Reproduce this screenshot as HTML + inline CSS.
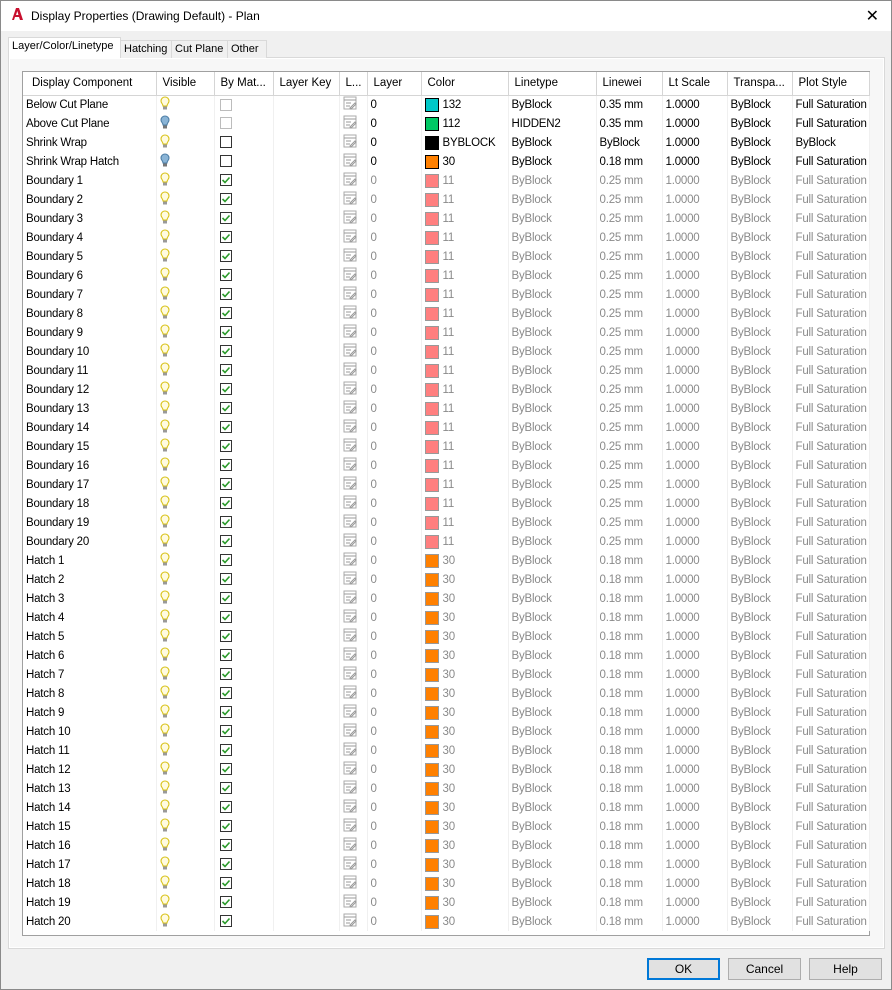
<!DOCTYPE html>
<html><head><meta charset="utf-8"><style>
*{box-sizing:border-box}
body{margin:0;width:892px;height:990px;background:#f0f0f0;font-family:"Liberation Sans",sans-serif;font-size:11.5px;color:#000;position:relative;overflow:hidden}
.win{position:absolute;left:0;top:0;width:892px;height:990px;border:1px solid #8a8a8a}
.title{position:absolute;left:1px;top:1px;width:890px;height:30px;background:#fff}
.title .t{position:absolute;left:30px;top:8px;font-size:12px}
.title .x{position:absolute;right:12px;top:5px;font-size:16px}
.tab{position:absolute;top:40px;height:18px;border:1px solid #d9d9d9;border-bottom:none;background:#f0f0f0;padding:2px 3px;font-size:11px;white-space:nowrap;overflow:hidden}
.panel{position:absolute;left:8px;top:57px;width:877px;height:892px;background:#fff;border:1px solid #d9d9d9}
.inner{position:absolute;left:1px;top:1px;width:873px;height:888px;background:#f7f7f7}
.grid{position:absolute;left:22px;top:71px;width:848px;height:865px;border:1px solid #a0a0a0;background:#fff}
table{border-collapse:collapse;table-layout:fixed;position:absolute;left:0;top:0;width:846px}
th{height:23px;font-weight:normal;text-align:left;padding:0 0 0 6px;border-right:1px solid #d5d5d5;border-bottom:1px solid #d5d5d5;background:#fff;white-space:nowrap;overflow:hidden}
td{height:19px;padding:0 0 0 3px;border-right:1px solid #f0f0f0;white-space:nowrap;overflow:hidden;vertical-align:middle;letter-spacing:-0.2px}
tr.g td.c{color:#8a8a8a}
.cb{display:inline-block;width:12px;height:12px;border:1px solid #333;background:#fff;vertical-align:middle;margin-left:2px;position:relative}
.cb.d{border-color:#bcbcbc}
.cb svg{position:absolute;left:-1px;top:-1px}
.sw{display:inline-block;width:14px;height:14px;border:1px solid #000;vertical-align:middle;margin-right:4px}
.sw.l{border-color:#999}
.btn{position:absolute;top:958px;height:22px;border:1px solid #adadad;background:#e1e1e1;text-align:center;line-height:20px;font-size:12px}
</style></head><body>
<svg width="0" height="0" style="position:absolute">
<defs>
<symbol id="by" viewBox="0 0 10 15"><path d="M5 1C2.5 1 1 3 1 5c0 2 2 3 2 5h4c0-2 2-3 2-5 0-2-1.5-4-4-4z" fill="#fffbe0" stroke="#d8c21a" stroke-width="1.1"/><rect x="3" y="10.5" width="4" height="3" fill="#999"/></symbol>
<symbol id="bb" viewBox="0 0 10 15"><path d="M5 1C2.5 1 1 3 1 5c0 2 2 3 2 5h4c0-2 2-3 2-5 0-2-1.5-4-4-4z" fill="#8ab4d6" stroke="#4f7fa6" stroke-width="1.1"/><rect x="3" y="10.5" width="4" height="3" fill="#777"/></symbol>
<symbol id="lk" viewBox="0 0 14 14"><rect x="1" y="1" width="12" height="12" fill="#fff" stroke="#aaa"/><path d="M1 4h12M3 7h5M3 10h4M7 12l5-5 1 1-5 5z" stroke="#999" fill="none"/></symbol>
<symbol id="ck" viewBox="0 0 12 12"><path d="M2.5 6l2.5 2.5 4.5-5" stroke="#2a9a2a" stroke-width="1.6" fill="none"/></symbol>
</defs></svg>
<div class="win"></div>
<div class="title"><svg style="position:absolute;left:9px;top:6px" width="14" height="14" viewBox="0 0 14 14"><path d="M2 13L6 1h3l4 12h-3l-1-3H5l-1 3z M6 8h2.5L7.3 4z" fill="#c8102e" fill-rule="evenodd"/></svg><span class="t">Display Properties (Drawing Default) - Plan</span><span class="x">✕</span></div>
<div class="panel"><div class="inner"></div></div>
<div class="tab" style="left:8px;top:37px;width:113px;height:21px;background:#fff;z-index:2">Layer/Color/Linetype</div>
<div class="tab" style="left:120px;width:52px">Hatching</div>
<div class="tab" style="left:171px;width:57px">Cut Plane</div>
<div class="tab" style="left:227px;width:40px">Other</div>
<div class="grid"><table>
<colgroup><col style="width:133px"><col style="width:58px"><col style="width:59px"><col style="width:66px"><col style="width:28px"><col style="width:54px"><col style="width:87px"><col style="width:88px"><col style="width:66px"><col style="width:65px"><col style="width:65px"><col style="width:77px"></colgroup>
<tr><th style="padding-left:9px">Display Component</th><th>Visible</th><th>By Mat...</th><th>Layer Key</th><th>L...</th><th>Layer</th><th>Color</th><th>Linetype</th><th>Linewei</th><th>Lt Scale</th><th>Transpa...</th><th>Plot Style</th></tr>
<tr><td>Below Cut Plane</td><td><svg width="10" height="15"><use href="#by"/></svg></td><td><span class="cb d"></span></td><td></td><td><svg width="14" height="14"><use href="#lk"/></svg></td><td class="c">0</td><td><span class="sw" style="background:#00c8c8"></span>132</td><td>ByBlock</td><td>0.35 mm</td><td>1.0000</td><td>ByBlock</td><td>Full Saturation</td></tr>
<tr><td>Above Cut Plane</td><td><svg width="10" height="15"><use href="#bb"/></svg></td><td><span class="cb d"></span></td><td></td><td><svg width="14" height="14"><use href="#lk"/></svg></td><td class="c">0</td><td><span class="sw" style="background:#00c864"></span>112</td><td>HIDDEN2</td><td>0.35 mm</td><td>1.0000</td><td>ByBlock</td><td>Full Saturation</td></tr>
<tr><td>Shrink Wrap</td><td><svg width="10" height="15"><use href="#by"/></svg></td><td><span class="cb"></span></td><td></td><td><svg width="14" height="14"><use href="#lk"/></svg></td><td class="c">0</td><td><span class="sw" style="background:#000"></span>BYBLOCK</td><td>ByBlock</td><td>ByBlock</td><td>1.0000</td><td>ByBlock</td><td>ByBlock</td></tr>
<tr><td>Shrink Wrap Hatch</td><td><svg width="10" height="15"><use href="#bb"/></svg></td><td><span class="cb"></span></td><td></td><td><svg width="14" height="14"><use href="#lk"/></svg></td><td class="c">0</td><td><span class="sw" style="background:#ff8000"></span>30</td><td>ByBlock</td><td>0.18 mm</td><td>1.0000</td><td>ByBlock</td><td>Full Saturation</td></tr>
<tr class="g"><td>Boundary 1</td><td><svg width="10" height="15"><use href="#by"/></svg></td><td><span class="cb"><svg width="12" height="12"><use href="#ck"/></svg></span></td><td></td><td><svg width="14" height="14"><use href="#lk"/></svg></td><td class="c">0</td><td class="c"><span class="sw l" style="background:#ff7f7f"></span>11</td><td class="c">ByBlock</td><td class="c">0.25 mm</td><td class="c">1.0000</td><td class="c">ByBlock</td><td class="c">Full Saturation</td></tr>
<tr class="g"><td>Boundary 2</td><td><svg width="10" height="15"><use href="#by"/></svg></td><td><span class="cb"><svg width="12" height="12"><use href="#ck"/></svg></span></td><td></td><td><svg width="14" height="14"><use href="#lk"/></svg></td><td class="c">0</td><td class="c"><span class="sw l" style="background:#ff7f7f"></span>11</td><td class="c">ByBlock</td><td class="c">0.25 mm</td><td class="c">1.0000</td><td class="c">ByBlock</td><td class="c">Full Saturation</td></tr>
<tr class="g"><td>Boundary 3</td><td><svg width="10" height="15"><use href="#by"/></svg></td><td><span class="cb"><svg width="12" height="12"><use href="#ck"/></svg></span></td><td></td><td><svg width="14" height="14"><use href="#lk"/></svg></td><td class="c">0</td><td class="c"><span class="sw l" style="background:#ff7f7f"></span>11</td><td class="c">ByBlock</td><td class="c">0.25 mm</td><td class="c">1.0000</td><td class="c">ByBlock</td><td class="c">Full Saturation</td></tr>
<tr class="g"><td>Boundary 4</td><td><svg width="10" height="15"><use href="#by"/></svg></td><td><span class="cb"><svg width="12" height="12"><use href="#ck"/></svg></span></td><td></td><td><svg width="14" height="14"><use href="#lk"/></svg></td><td class="c">0</td><td class="c"><span class="sw l" style="background:#ff7f7f"></span>11</td><td class="c">ByBlock</td><td class="c">0.25 mm</td><td class="c">1.0000</td><td class="c">ByBlock</td><td class="c">Full Saturation</td></tr>
<tr class="g"><td>Boundary 5</td><td><svg width="10" height="15"><use href="#by"/></svg></td><td><span class="cb"><svg width="12" height="12"><use href="#ck"/></svg></span></td><td></td><td><svg width="14" height="14"><use href="#lk"/></svg></td><td class="c">0</td><td class="c"><span class="sw l" style="background:#ff7f7f"></span>11</td><td class="c">ByBlock</td><td class="c">0.25 mm</td><td class="c">1.0000</td><td class="c">ByBlock</td><td class="c">Full Saturation</td></tr>
<tr class="g"><td>Boundary 6</td><td><svg width="10" height="15"><use href="#by"/></svg></td><td><span class="cb"><svg width="12" height="12"><use href="#ck"/></svg></span></td><td></td><td><svg width="14" height="14"><use href="#lk"/></svg></td><td class="c">0</td><td class="c"><span class="sw l" style="background:#ff7f7f"></span>11</td><td class="c">ByBlock</td><td class="c">0.25 mm</td><td class="c">1.0000</td><td class="c">ByBlock</td><td class="c">Full Saturation</td></tr>
<tr class="g"><td>Boundary 7</td><td><svg width="10" height="15"><use href="#by"/></svg></td><td><span class="cb"><svg width="12" height="12"><use href="#ck"/></svg></span></td><td></td><td><svg width="14" height="14"><use href="#lk"/></svg></td><td class="c">0</td><td class="c"><span class="sw l" style="background:#ff7f7f"></span>11</td><td class="c">ByBlock</td><td class="c">0.25 mm</td><td class="c">1.0000</td><td class="c">ByBlock</td><td class="c">Full Saturation</td></tr>
<tr class="g"><td>Boundary 8</td><td><svg width="10" height="15"><use href="#by"/></svg></td><td><span class="cb"><svg width="12" height="12"><use href="#ck"/></svg></span></td><td></td><td><svg width="14" height="14"><use href="#lk"/></svg></td><td class="c">0</td><td class="c"><span class="sw l" style="background:#ff7f7f"></span>11</td><td class="c">ByBlock</td><td class="c">0.25 mm</td><td class="c">1.0000</td><td class="c">ByBlock</td><td class="c">Full Saturation</td></tr>
<tr class="g"><td>Boundary 9</td><td><svg width="10" height="15"><use href="#by"/></svg></td><td><span class="cb"><svg width="12" height="12"><use href="#ck"/></svg></span></td><td></td><td><svg width="14" height="14"><use href="#lk"/></svg></td><td class="c">0</td><td class="c"><span class="sw l" style="background:#ff7f7f"></span>11</td><td class="c">ByBlock</td><td class="c">0.25 mm</td><td class="c">1.0000</td><td class="c">ByBlock</td><td class="c">Full Saturation</td></tr>
<tr class="g"><td>Boundary 10</td><td><svg width="10" height="15"><use href="#by"/></svg></td><td><span class="cb"><svg width="12" height="12"><use href="#ck"/></svg></span></td><td></td><td><svg width="14" height="14"><use href="#lk"/></svg></td><td class="c">0</td><td class="c"><span class="sw l" style="background:#ff7f7f"></span>11</td><td class="c">ByBlock</td><td class="c">0.25 mm</td><td class="c">1.0000</td><td class="c">ByBlock</td><td class="c">Full Saturation</td></tr>
<tr class="g"><td>Boundary 11</td><td><svg width="10" height="15"><use href="#by"/></svg></td><td><span class="cb"><svg width="12" height="12"><use href="#ck"/></svg></span></td><td></td><td><svg width="14" height="14"><use href="#lk"/></svg></td><td class="c">0</td><td class="c"><span class="sw l" style="background:#ff7f7f"></span>11</td><td class="c">ByBlock</td><td class="c">0.25 mm</td><td class="c">1.0000</td><td class="c">ByBlock</td><td class="c">Full Saturation</td></tr>
<tr class="g"><td>Boundary 12</td><td><svg width="10" height="15"><use href="#by"/></svg></td><td><span class="cb"><svg width="12" height="12"><use href="#ck"/></svg></span></td><td></td><td><svg width="14" height="14"><use href="#lk"/></svg></td><td class="c">0</td><td class="c"><span class="sw l" style="background:#ff7f7f"></span>11</td><td class="c">ByBlock</td><td class="c">0.25 mm</td><td class="c">1.0000</td><td class="c">ByBlock</td><td class="c">Full Saturation</td></tr>
<tr class="g"><td>Boundary 13</td><td><svg width="10" height="15"><use href="#by"/></svg></td><td><span class="cb"><svg width="12" height="12"><use href="#ck"/></svg></span></td><td></td><td><svg width="14" height="14"><use href="#lk"/></svg></td><td class="c">0</td><td class="c"><span class="sw l" style="background:#ff7f7f"></span>11</td><td class="c">ByBlock</td><td class="c">0.25 mm</td><td class="c">1.0000</td><td class="c">ByBlock</td><td class="c">Full Saturation</td></tr>
<tr class="g"><td>Boundary 14</td><td><svg width="10" height="15"><use href="#by"/></svg></td><td><span class="cb"><svg width="12" height="12"><use href="#ck"/></svg></span></td><td></td><td><svg width="14" height="14"><use href="#lk"/></svg></td><td class="c">0</td><td class="c"><span class="sw l" style="background:#ff7f7f"></span>11</td><td class="c">ByBlock</td><td class="c">0.25 mm</td><td class="c">1.0000</td><td class="c">ByBlock</td><td class="c">Full Saturation</td></tr>
<tr class="g"><td>Boundary 15</td><td><svg width="10" height="15"><use href="#by"/></svg></td><td><span class="cb"><svg width="12" height="12"><use href="#ck"/></svg></span></td><td></td><td><svg width="14" height="14"><use href="#lk"/></svg></td><td class="c">0</td><td class="c"><span class="sw l" style="background:#ff7f7f"></span>11</td><td class="c">ByBlock</td><td class="c">0.25 mm</td><td class="c">1.0000</td><td class="c">ByBlock</td><td class="c">Full Saturation</td></tr>
<tr class="g"><td>Boundary 16</td><td><svg width="10" height="15"><use href="#by"/></svg></td><td><span class="cb"><svg width="12" height="12"><use href="#ck"/></svg></span></td><td></td><td><svg width="14" height="14"><use href="#lk"/></svg></td><td class="c">0</td><td class="c"><span class="sw l" style="background:#ff7f7f"></span>11</td><td class="c">ByBlock</td><td class="c">0.25 mm</td><td class="c">1.0000</td><td class="c">ByBlock</td><td class="c">Full Saturation</td></tr>
<tr class="g"><td>Boundary 17</td><td><svg width="10" height="15"><use href="#by"/></svg></td><td><span class="cb"><svg width="12" height="12"><use href="#ck"/></svg></span></td><td></td><td><svg width="14" height="14"><use href="#lk"/></svg></td><td class="c">0</td><td class="c"><span class="sw l" style="background:#ff7f7f"></span>11</td><td class="c">ByBlock</td><td class="c">0.25 mm</td><td class="c">1.0000</td><td class="c">ByBlock</td><td class="c">Full Saturation</td></tr>
<tr class="g"><td>Boundary 18</td><td><svg width="10" height="15"><use href="#by"/></svg></td><td><span class="cb"><svg width="12" height="12"><use href="#ck"/></svg></span></td><td></td><td><svg width="14" height="14"><use href="#lk"/></svg></td><td class="c">0</td><td class="c"><span class="sw l" style="background:#ff7f7f"></span>11</td><td class="c">ByBlock</td><td class="c">0.25 mm</td><td class="c">1.0000</td><td class="c">ByBlock</td><td class="c">Full Saturation</td></tr>
<tr class="g"><td>Boundary 19</td><td><svg width="10" height="15"><use href="#by"/></svg></td><td><span class="cb"><svg width="12" height="12"><use href="#ck"/></svg></span></td><td></td><td><svg width="14" height="14"><use href="#lk"/></svg></td><td class="c">0</td><td class="c"><span class="sw l" style="background:#ff7f7f"></span>11</td><td class="c">ByBlock</td><td class="c">0.25 mm</td><td class="c">1.0000</td><td class="c">ByBlock</td><td class="c">Full Saturation</td></tr>
<tr class="g"><td>Boundary 20</td><td><svg width="10" height="15"><use href="#by"/></svg></td><td><span class="cb"><svg width="12" height="12"><use href="#ck"/></svg></span></td><td></td><td><svg width="14" height="14"><use href="#lk"/></svg></td><td class="c">0</td><td class="c"><span class="sw l" style="background:#ff7f7f"></span>11</td><td class="c">ByBlock</td><td class="c">0.25 mm</td><td class="c">1.0000</td><td class="c">ByBlock</td><td class="c">Full Saturation</td></tr>
<tr class="g"><td>Hatch 1</td><td><svg width="10" height="15"><use href="#by"/></svg></td><td><span class="cb"><svg width="12" height="12"><use href="#ck"/></svg></span></td><td></td><td><svg width="14" height="14"><use href="#lk"/></svg></td><td class="c">0</td><td class="c"><span class="sw l" style="background:#ff8000"></span>30</td><td class="c">ByBlock</td><td class="c">0.18 mm</td><td class="c">1.0000</td><td class="c">ByBlock</td><td class="c">Full Saturation</td></tr>
<tr class="g"><td>Hatch 2</td><td><svg width="10" height="15"><use href="#by"/></svg></td><td><span class="cb"><svg width="12" height="12"><use href="#ck"/></svg></span></td><td></td><td><svg width="14" height="14"><use href="#lk"/></svg></td><td class="c">0</td><td class="c"><span class="sw l" style="background:#ff8000"></span>30</td><td class="c">ByBlock</td><td class="c">0.18 mm</td><td class="c">1.0000</td><td class="c">ByBlock</td><td class="c">Full Saturation</td></tr>
<tr class="g"><td>Hatch 3</td><td><svg width="10" height="15"><use href="#by"/></svg></td><td><span class="cb"><svg width="12" height="12"><use href="#ck"/></svg></span></td><td></td><td><svg width="14" height="14"><use href="#lk"/></svg></td><td class="c">0</td><td class="c"><span class="sw l" style="background:#ff8000"></span>30</td><td class="c">ByBlock</td><td class="c">0.18 mm</td><td class="c">1.0000</td><td class="c">ByBlock</td><td class="c">Full Saturation</td></tr>
<tr class="g"><td>Hatch 4</td><td><svg width="10" height="15"><use href="#by"/></svg></td><td><span class="cb"><svg width="12" height="12"><use href="#ck"/></svg></span></td><td></td><td><svg width="14" height="14"><use href="#lk"/></svg></td><td class="c">0</td><td class="c"><span class="sw l" style="background:#ff8000"></span>30</td><td class="c">ByBlock</td><td class="c">0.18 mm</td><td class="c">1.0000</td><td class="c">ByBlock</td><td class="c">Full Saturation</td></tr>
<tr class="g"><td>Hatch 5</td><td><svg width="10" height="15"><use href="#by"/></svg></td><td><span class="cb"><svg width="12" height="12"><use href="#ck"/></svg></span></td><td></td><td><svg width="14" height="14"><use href="#lk"/></svg></td><td class="c">0</td><td class="c"><span class="sw l" style="background:#ff8000"></span>30</td><td class="c">ByBlock</td><td class="c">0.18 mm</td><td class="c">1.0000</td><td class="c">ByBlock</td><td class="c">Full Saturation</td></tr>
<tr class="g"><td>Hatch 6</td><td><svg width="10" height="15"><use href="#by"/></svg></td><td><span class="cb"><svg width="12" height="12"><use href="#ck"/></svg></span></td><td></td><td><svg width="14" height="14"><use href="#lk"/></svg></td><td class="c">0</td><td class="c"><span class="sw l" style="background:#ff8000"></span>30</td><td class="c">ByBlock</td><td class="c">0.18 mm</td><td class="c">1.0000</td><td class="c">ByBlock</td><td class="c">Full Saturation</td></tr>
<tr class="g"><td>Hatch 7</td><td><svg width="10" height="15"><use href="#by"/></svg></td><td><span class="cb"><svg width="12" height="12"><use href="#ck"/></svg></span></td><td></td><td><svg width="14" height="14"><use href="#lk"/></svg></td><td class="c">0</td><td class="c"><span class="sw l" style="background:#ff8000"></span>30</td><td class="c">ByBlock</td><td class="c">0.18 mm</td><td class="c">1.0000</td><td class="c">ByBlock</td><td class="c">Full Saturation</td></tr>
<tr class="g"><td>Hatch 8</td><td><svg width="10" height="15"><use href="#by"/></svg></td><td><span class="cb"><svg width="12" height="12"><use href="#ck"/></svg></span></td><td></td><td><svg width="14" height="14"><use href="#lk"/></svg></td><td class="c">0</td><td class="c"><span class="sw l" style="background:#ff8000"></span>30</td><td class="c">ByBlock</td><td class="c">0.18 mm</td><td class="c">1.0000</td><td class="c">ByBlock</td><td class="c">Full Saturation</td></tr>
<tr class="g"><td>Hatch 9</td><td><svg width="10" height="15"><use href="#by"/></svg></td><td><span class="cb"><svg width="12" height="12"><use href="#ck"/></svg></span></td><td></td><td><svg width="14" height="14"><use href="#lk"/></svg></td><td class="c">0</td><td class="c"><span class="sw l" style="background:#ff8000"></span>30</td><td class="c">ByBlock</td><td class="c">0.18 mm</td><td class="c">1.0000</td><td class="c">ByBlock</td><td class="c">Full Saturation</td></tr>
<tr class="g"><td>Hatch 10</td><td><svg width="10" height="15"><use href="#by"/></svg></td><td><span class="cb"><svg width="12" height="12"><use href="#ck"/></svg></span></td><td></td><td><svg width="14" height="14"><use href="#lk"/></svg></td><td class="c">0</td><td class="c"><span class="sw l" style="background:#ff8000"></span>30</td><td class="c">ByBlock</td><td class="c">0.18 mm</td><td class="c">1.0000</td><td class="c">ByBlock</td><td class="c">Full Saturation</td></tr>
<tr class="g"><td>Hatch 11</td><td><svg width="10" height="15"><use href="#by"/></svg></td><td><span class="cb"><svg width="12" height="12"><use href="#ck"/></svg></span></td><td></td><td><svg width="14" height="14"><use href="#lk"/></svg></td><td class="c">0</td><td class="c"><span class="sw l" style="background:#ff8000"></span>30</td><td class="c">ByBlock</td><td class="c">0.18 mm</td><td class="c">1.0000</td><td class="c">ByBlock</td><td class="c">Full Saturation</td></tr>
<tr class="g"><td>Hatch 12</td><td><svg width="10" height="15"><use href="#by"/></svg></td><td><span class="cb"><svg width="12" height="12"><use href="#ck"/></svg></span></td><td></td><td><svg width="14" height="14"><use href="#lk"/></svg></td><td class="c">0</td><td class="c"><span class="sw l" style="background:#ff8000"></span>30</td><td class="c">ByBlock</td><td class="c">0.18 mm</td><td class="c">1.0000</td><td class="c">ByBlock</td><td class="c">Full Saturation</td></tr>
<tr class="g"><td>Hatch 13</td><td><svg width="10" height="15"><use href="#by"/></svg></td><td><span class="cb"><svg width="12" height="12"><use href="#ck"/></svg></span></td><td></td><td><svg width="14" height="14"><use href="#lk"/></svg></td><td class="c">0</td><td class="c"><span class="sw l" style="background:#ff8000"></span>30</td><td class="c">ByBlock</td><td class="c">0.18 mm</td><td class="c">1.0000</td><td class="c">ByBlock</td><td class="c">Full Saturation</td></tr>
<tr class="g"><td>Hatch 14</td><td><svg width="10" height="15"><use href="#by"/></svg></td><td><span class="cb"><svg width="12" height="12"><use href="#ck"/></svg></span></td><td></td><td><svg width="14" height="14"><use href="#lk"/></svg></td><td class="c">0</td><td class="c"><span class="sw l" style="background:#ff8000"></span>30</td><td class="c">ByBlock</td><td class="c">0.18 mm</td><td class="c">1.0000</td><td class="c">ByBlock</td><td class="c">Full Saturation</td></tr>
<tr class="g"><td>Hatch 15</td><td><svg width="10" height="15"><use href="#by"/></svg></td><td><span class="cb"><svg width="12" height="12"><use href="#ck"/></svg></span></td><td></td><td><svg width="14" height="14"><use href="#lk"/></svg></td><td class="c">0</td><td class="c"><span class="sw l" style="background:#ff8000"></span>30</td><td class="c">ByBlock</td><td class="c">0.18 mm</td><td class="c">1.0000</td><td class="c">ByBlock</td><td class="c">Full Saturation</td></tr>
<tr class="g"><td>Hatch 16</td><td><svg width="10" height="15"><use href="#by"/></svg></td><td><span class="cb"><svg width="12" height="12"><use href="#ck"/></svg></span></td><td></td><td><svg width="14" height="14"><use href="#lk"/></svg></td><td class="c">0</td><td class="c"><span class="sw l" style="background:#ff8000"></span>30</td><td class="c">ByBlock</td><td class="c">0.18 mm</td><td class="c">1.0000</td><td class="c">ByBlock</td><td class="c">Full Saturation</td></tr>
<tr class="g"><td>Hatch 17</td><td><svg width="10" height="15"><use href="#by"/></svg></td><td><span class="cb"><svg width="12" height="12"><use href="#ck"/></svg></span></td><td></td><td><svg width="14" height="14"><use href="#lk"/></svg></td><td class="c">0</td><td class="c"><span class="sw l" style="background:#ff8000"></span>30</td><td class="c">ByBlock</td><td class="c">0.18 mm</td><td class="c">1.0000</td><td class="c">ByBlock</td><td class="c">Full Saturation</td></tr>
<tr class="g"><td>Hatch 18</td><td><svg width="10" height="15"><use href="#by"/></svg></td><td><span class="cb"><svg width="12" height="12"><use href="#ck"/></svg></span></td><td></td><td><svg width="14" height="14"><use href="#lk"/></svg></td><td class="c">0</td><td class="c"><span class="sw l" style="background:#ff8000"></span>30</td><td class="c">ByBlock</td><td class="c">0.18 mm</td><td class="c">1.0000</td><td class="c">ByBlock</td><td class="c">Full Saturation</td></tr>
<tr class="g"><td>Hatch 19</td><td><svg width="10" height="15"><use href="#by"/></svg></td><td><span class="cb"><svg width="12" height="12"><use href="#ck"/></svg></span></td><td></td><td><svg width="14" height="14"><use href="#lk"/></svg></td><td class="c">0</td><td class="c"><span class="sw l" style="background:#ff8000"></span>30</td><td class="c">ByBlock</td><td class="c">0.18 mm</td><td class="c">1.0000</td><td class="c">ByBlock</td><td class="c">Full Saturation</td></tr>
<tr class="g"><td>Hatch 20</td><td><svg width="10" height="15"><use href="#by"/></svg></td><td><span class="cb"><svg width="12" height="12"><use href="#ck"/></svg></span></td><td></td><td><svg width="14" height="14"><use href="#lk"/></svg></td><td class="c">0</td><td class="c"><span class="sw l" style="background:#ff8000"></span>30</td><td class="c">ByBlock</td><td class="c">0.18 mm</td><td class="c">1.0000</td><td class="c">ByBlock</td><td class="c">Full Saturation</td></tr>
</table></div>
<div class="btn" style="left:647px;width:73px;border:2px solid #0078d7;line-height:18px">OK</div>
<div class="btn" style="left:728px;width:73px">Cancel</div>
<div class="btn" style="left:809px;width:73px">Help</div>
</body></html>
